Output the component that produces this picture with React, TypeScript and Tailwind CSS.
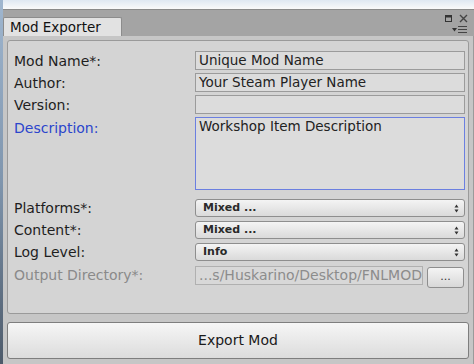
import React from 'react';

const font = { fontFamily: '"DejaVu Sans", Verdana, sans-serif' };

const Label = ({ text, tone = 'text-[#1e1e1e]' }: { text: string; tone?: string }) => (
  <div className={`w-[181px] shrink-0 text-[14px] leading-none ${tone}`}>{text}</div>
);

const TextField = ({ value, h = 'h-[19px]', focus = false }: { value: string; h?: string; focus?: boolean }) => (
  <div
    className={`flex-1 ${h} border ${focus ? 'border-[#6b7fe0]' : 'border-[#9b9b9b]'} bg-[#dcdcdc] px-[3px] text-[13.5px] leading-[17px] text-[#222]`}
  >
    {value}
  </div>
);

const Popup = ({ value }: { value: string }) => (
  <div className="flex-1 h-[18px] flex items-center justify-between rounded-[3px] border border-[#8e8e8e] bg-gradient-to-b from-[#f4f4f4] to-[#dadada] pl-[7px] pr-[5px] text-[11px] font-bold text-[#2a2a2a]">
    <span>{value}</span>
    <svg width="5" height="9" viewBox="0 0 5 9">
      <path d="M0.5 3.5 L2.5 0.5 L4.5 3.5 Z M0.5 5.5 L2.5 8.5 L4.5 5.5 Z" fill="#333" />
    </svg>
  </div>
);

const Row = ({ children, className = '' }: { children: React.ReactNode; className?: string }) => (
  <div className={`flex items-center ${className}`}>{children}</div>
);

export default function App() {
  return (
    <div className="w-[474px] h-[364px] flex overflow-hidden" style={font}>
      <div className="w-[3px] shrink-0 bg-gradient-to-b from-[#9fb6cf] via-[#7f95ad] to-[#4d5a6a]" />
      <div className="flex-1 flex flex-col">
        <div className="h-[10px] bg-gradient-to-b from-[#dfe8f2] to-[#fafafa] border-b border-[#8a8a8a]" />
        <div className="h-[26px] flex items-end justify-between bg-[#a4a4a4] relative">
          <div className="w-[119px] h-[19px] bg-[#e2e2e2] border border-b-0 border-[#8c8c8c] rounded-t-[2px] px-[6px] pt-[2px] text-[13.5px] leading-[15px] text-[#111]">
            Mod Exporter
          </div>
          <div className="absolute right-[6px] top-[4px] flex items-center gap-[7px]">
            <svg width="7" height="7" viewBox="0 0 7 7">
              <rect x="0.5" y="0.5" width="6" height="6" fill="none" stroke="#333" />
              <rect x="0" y="0" width="7" height="2.5" fill="#333" />
            </svg>
            <svg width="9" height="9" viewBox="0 0 9 9">
              <path d="M1 1 L8 8 M8 1 L1 8" stroke="#444" strokeWidth="1.4" />
            </svg>
          </div>
          <div className="absolute right-[7px] top-[16px] flex items-center gap-[1px]">
            <svg width="5" height="4" viewBox="0 0 5 4">
              <path d="M0 0 L5 0 L2.5 3.5 Z" fill="#333" />
            </svg>
            <svg width="9" height="7" viewBox="0 0 9 7">
              <path d="M0 0.5 H9 M0 3.5 H9 M0 6.5 H9" stroke="#444" strokeWidth="1" />
            </svg>
          </div>
        </div>
        <div className="flex-1 bg-[#c6c6c6] border-r border-[#9a9a9a] flex flex-col px-[4px] pt-[4px]">
          <div className="h-[274px] border border-[#9a9a9a] rounded-[3px] bg-[#d4d4d4] pl-[6px] pr-[3px] pt-[10px] flex flex-col">
            <Row className="h-[19px]">
              <Label text="Mod Name*:" />
              <TextField value="Unique Mod Name" />
            </Row>
            <Row className="h-[19px] mt-[3px]">
              <Label text="Author:" />
              <TextField value="Your Steam Player Name" />
            </Row>
            <Row className="h-[19px] mt-[3px]">
              <Label text="Version:" />
              <TextField value="" />
            </Row>
            <div className="flex items-start mt-[3px]">
              <div className="pt-[4px]">
                <Label text="Description:" tone="text-[#2b45cc]" />
              </div>
              <TextField value="Workshop Item Description" h="h-[73px]" focus />
            </div>
            <Row className="h-[18px] mt-[9px]">
              <Label text="Platforms*:" />
              <Popup value="Mixed ..." />
            </Row>
            <Row className="h-[18px] mt-[4px]">
              <Label text="Content*:" />
              <Popup value="Mixed ..." />
            </Row>
            <Row className="h-[18px] mt-[4px]">
              <Label text="Log Level:" />
              <Popup value="Info" />
            </Row>
            <div className="flex items-start mt-[5px]">
              <div className="pt-[2px]">
                <Label text="Output Directory*:" tone="text-[#8a8a8a]" />
              </div>
              <div className="w-[228px] h-[19px] border border-[#b0b0b0] bg-[#d8d8d8] px-[3px] text-[14px] leading-[17px] text-[#8c8c8c] overflow-hidden whitespace-nowrap">
                ...s/Huskarino/Desktop/FNLMOD
              </div>
              <div className="ml-[4px] mt-[1px] w-[37px] h-[21px] rounded-[3px] border border-[#8e8e8e] bg-gradient-to-b from-[#f4f4f4] to-[#d8d8d8] flex items-end justify-center pb-[5px] text-[11px] leading-none text-[#333]">
                ...
              </div>
            </div>
          </div>
          <div className="mt-[8px] h-[37px] rounded-[3px] border border-[#7e7e7e] bg-gradient-to-b from-[#f6f6f6] to-[#dcdcdc] flex items-center justify-center text-[14px] text-[#1a1a1a]">
            Export Mod
          </div>
        </div>
      </div>
    </div>
  );
}
